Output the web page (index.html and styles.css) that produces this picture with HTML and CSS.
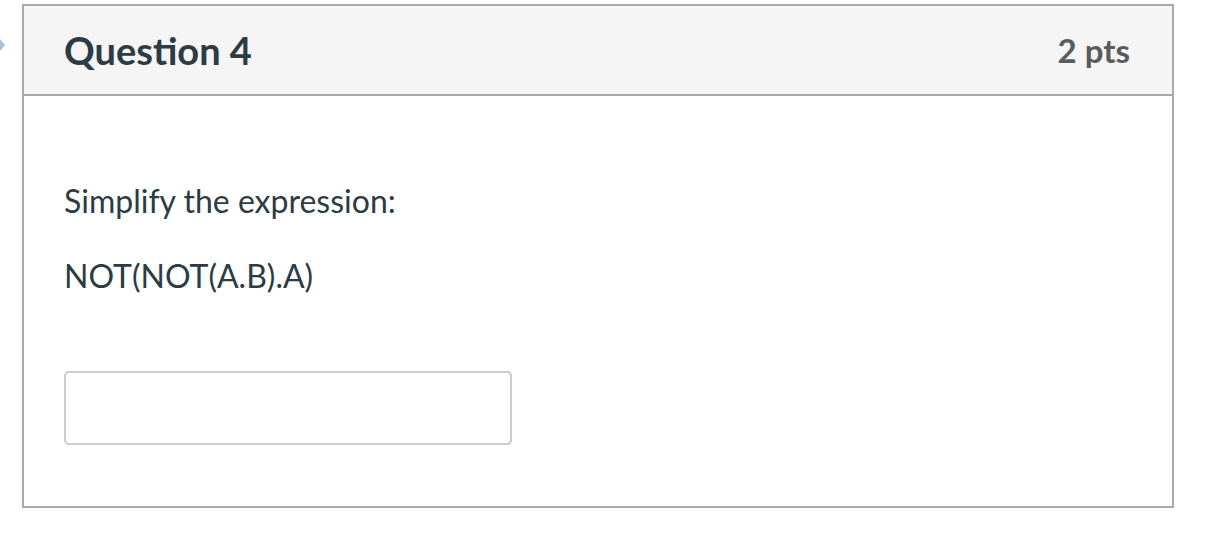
FILE: index.html
```html
<!DOCTYPE html>
<html>
<head>
<meta charset="utf-8">
<link rel="stylesheet" href="styles.css">
</head>
<body>
<div class="page">
  <svg class="marker" width="8" height="20" viewBox="0 0 8 20"><path d="M0 4 L5 10 L0 16 Z" fill="#a9c2d8"/></svg>
  <div class="card">
    <div class="header">
      <div class="title">Question 4</div>
      <div class="pts">2 pts</div>
    </div>
    <div class="body">
      <p class="text">Simplify the expression:</p>
      <p class="text">NOT(NOT(A.B).A)</p>
      <div class="answer"></div>
    </div>
  </div>
</div>
</body>
</html>
```
FILE: styles.css
```css
html, body {
  margin: 0;
  padding: 0;
  background: #ffffff;
}
body {
  font-family: Lato, "Liberation Sans", sans-serif;
  color: #2d3b45;
}
.page {
  position: relative;
  padding: 4px 0 0 22px;
}
.marker {
  position: absolute;
  left: 0;
  top: 35px;
}
.card {
  width: 1148px;
  height: 500px;
  border: 2px solid #a9a9a9;
  display: flex;
  flex-direction: column;
}
.header {
  height: 88px;
  flex: none;
  background: #f5f5f5;
  border-bottom: 2px solid #a9a9a9;
  display: flex;
  align-items: center;
  justify-content: space-between;
  padding: 0 42px 0 40px;
}
.title {
  font-weight: 700;
  font-size: 38px;
  color: #2d3b45;
}
.pts {
  font-weight: 700;
  font-size: 33px;
  color: #5b5b5b;
}
.body {
  padding: 87px 40px 0 40px;
}
.text {
  margin: 0 0 39px 0;
  font-size: 32px;
  line-height: 36px;
}
.answer {
  margin-top: 77px;
  width: 444px;
  height: 70px;
  border: 2px solid #cccccc;
  border-radius: 5px;
  background: #ffffff;
}
```
